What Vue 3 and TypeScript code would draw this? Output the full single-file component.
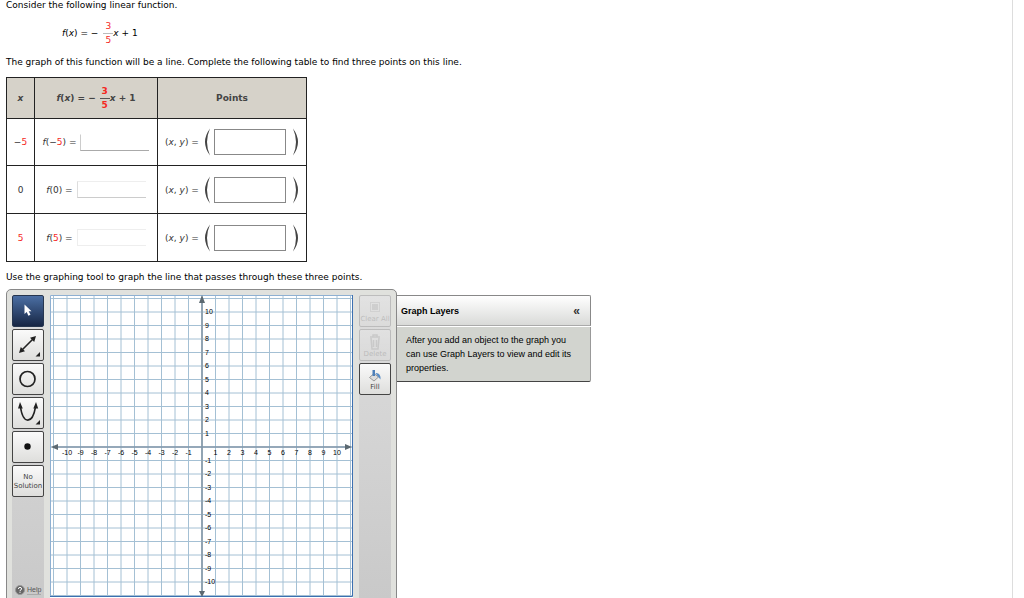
<script setup lang="ts">
import { ref } from 'vue'

interface Row {
  x: string
  red: boolean
  value: string
  point: string
  tone: string
}

const rows = ref<Row[]>([
  { x: '−5', red: true, value: '', point: '', tone: 'strong' },
  { x: '0', red: false, value: '', point: '', tone: 'soft' },
  { x: '5', red: true, value: '', point: '', tone: 'faint' },
])

const unit = 13.5
const originX = 152
const originY = 152
const gridLines = Array.from({ length: 23 }, (_, i) => i - 11)
const ticks = gridLines.filter((n) => n !== 0 && Math.abs(n) <= 10)
const px = (n: number) => originX + n * unit
const py = (n: number) => originY - n * unit
const digits = (s: string) => s.replace('−', '')
</script>

<template>
  <main class="page">
    <p class="line intro">Consider the following linear function.</p>

    <div class="formula">
      <span><i>f</i>(<i>x</i>) = −</span>
      <span class="fraction"><span>3</span><span class="den">5</span></span>
      <span><i>x</i> + 1</span>
    </div>

    <p class="line">The graph of this function will be a line. Complete the following table to find three points on this line.</p>

    <table class="points">
      <colgroup><col class="c-x"><col class="c-f"><col class="c-p"></colgroup>
      <thead>
        <tr>
          <th scope="col"><i>x</i></th>
          <th scope="col">
            <div class="expr">
              <span><i>f</i>(<i>x</i>) = −</span>
              <span class="fraction"><span>3</span><span class="den">5</span></span>
              <span><i>x</i> + 1</span>
            </div>
          </th>
          <th scope="col">Points</th>
        </tr>
      </thead>
      <tbody>
        <tr v-for="(row, i) in rows" :key="row.x">
          <td><template v-if="row.x !== digits(row.x)">−</template><span :class="{ red: row.red }">{{ digits(row.x) }}</span></td>
          <td>
            <div class="expr">
              <label :for="'value' + i"><i>f</i>(<template v-if="row.x !== digits(row.x)">−</template><span :class="{ red: row.red }">{{ digits(row.x) }}</span>) =</label>
              <input :id="'value' + i" v-model="row.value" class="value" :class="row.tone" type="text">
            </div>
          </td>
          <td>
            <div class="pair">
              <label :for="'point' + i">(<i>x</i>, <i>y</i>) =</label>
              <svg class="paren" width="7" height="28" viewBox="0 0 7 28" aria-hidden="true"><path d="M6 .5Q-4 14 6 27.5Q0 14 6 .5Z" /></svg>
              <input :id="'point' + i" v-model="row.point" class="point" type="text">
              <svg class="paren close" width="7" height="28" viewBox="0 0 7 28" aria-hidden="true"><path d="M1 .5Q11 14 1 27.5Q7 14 1 .5Z" /></svg>
            </div>
          </td>
        </tr>
      </tbody>
    </table>

    <p class="line">Use the graphing tool to graph the line that passes through these three points.</p>

    <section class="grapher" aria-label="Graphing tool">
      <div class="board">
        <div class="toolbar">
          <button class="tool active" type="button" aria-label="Select">
            <svg width="32" height="32" viewBox="0 0 32 32"><path d="M12.5 9.5V19l2.2-2 1.7 3.8 2.1-1-1.8-3.6h2.8z" fill="#fff" /></svg>
          </button>
          <button class="tool" type="button" aria-label="Line">
            <svg width="32" height="32" viewBox="0 0 32 32"><path d="M9 22L22 9" stroke="#222" stroke-width="1.6" /><path d="M7 24l1.8-6 4.2 4.2zM24 7l-1.8 6-4.2-4.2zM28 23v4.500h-4.500z" fill="#222" /></svg>
          </button>
          <button class="tool" type="button" aria-label="Circle">
            <svg width="32" height="32" viewBox="0 0 32 32"><circle cx="15.500" cy="16" r="7.500" fill="none" stroke="#222" stroke-width="1.700" /></svg>
          </button>
          <button class="tool" type="button" aria-label="Parabola">
            <svg width="32" height="32" viewBox="0 0 32 32"><path d="M8.500 10C11 27.500 20.500 27.500 23.500 10" fill="none" stroke="#222" stroke-width="1.600" /><path d="M8 5l2.800 6.500H6zM24 5l2.200 6.500H21.300zM28 23v4.500h-4.500z" fill="#222" /></svg>
          </button>
          <button class="tool" type="button" aria-label="Point">
            <svg width="32" height="32" viewBox="0 0 32 32"><circle cx="15.500" cy="15.500" r="3.200" fill="#111" /></svg>
          </button>
          <button class="tool words" type="button">No<br>Solution</button>
          <a class="help" href="#help">
            <svg width="10" height="10" viewBox="0 0 10 10" aria-hidden="true"><circle cx="5" cy="5" r="4.500" fill="#666" stroke="#999" /><path d="M3.400 4Q3.400 2.400 5 2.400T6.600 4Q6.600 4.700 5 5.500V6.300M5 7.200V8" fill="none" stroke="#fff" /></svg>
            <span>Help</span>
          </a>
        </div>

        <svg class="graph" width="303" height="303" viewBox="0 0 303 303" role="img" aria-label="Coordinate plane from −10 to 10">
          <rect width="303" height="303" fill="#fff" />
          <g stroke="#a4c0d4">
            <template v-for="n in gridLines" :key="n">
              <line :x1="px(n)" y1="0" :x2="px(n)" y2="302" />
              <line x1="0" :y1="py(n)" x2="302" :y2="py(n)" />
            </template>
          </g>
          <path d="M.5 302V.5H302" fill="none" stroke="#8eb0d2" />
          <path d="M302.500 0V301.500H0" fill="none" stroke="#3c70b0" />
          <path d="M152 3V299" stroke="#91a4b3" stroke-width="2" />
          <path d="M4 152H298" stroke="#8196a8" stroke-width="1.500" />
          <path d="M152 0l3 8h-6zM152 302l3-6h-6zM1 152l7-3v6zM302 152l-7-3v6z" fill="#5c6971" />
          <g class="tick">
            <text v-for="n in ticks" :key="'x' + n" :x="px(n)" y="160" text-anchor="middle">{{ n }}</text>
            <text v-for="n in ticks" :key="'y' + n" x="155" :y="py(n) + 2">{{ n }}</text>
          </g>
        </svg>

        <div class="toolbar">
          <button class="tool words disabled" type="button" disabled>
            <svg width="14" height="15" viewBox="0 0 14 15" aria-hidden="true"><rect x="2.500" y="2.500" width="9" height="9" fill="none" stroke="#aaa" /><rect x="4" y="4" width="6" height="6" fill="#999" /></svg>
            <span>Clear All</span>
          </button>
          <button class="tool words disabled" type="button" disabled>
            <svg width="14" height="17" viewBox="0 0 14 17" aria-hidden="true"><path d="M2 4h10M5 4V2h4v2M3 5l1 11h6l1-11M5.500 7v7M8.500 7v7" fill="none" stroke="#888" stroke-width="1.500" /></svg>
            <span>Delete</span>
          </button>
          <button class="tool words fill" type="button">
            <svg width="14" height="13" viewBox="0 0 14 13" aria-hidden="true"><path d="M1.500 8.500l4.500-4 4.500 3.500-4.500 4z" fill="#ddd" stroke="#999" /><path d="M4.500 1h2.500v6H4.500z" fill="#4d7fb9" /><path d="M7.500 4q5.500-.5 5 6.500L9.500 7z" fill="#5a8dc7" /></svg>
            <span>Fill</span>
          </button>
        </div>
      </div>

      <aside class="layers">
        <header class="layers-head">
          <h2>Graph Layers</h2>
          <button type="button" aria-label="Collapse layers">«</button>
        </header>
        <p class="layers-body">After you add an object to the graph you can use Graph Layers to view and edit its properties.</p>
      </aside>
    </section>
  </main>
</template>

<style>
html, body { background: #fff; }
</style>

<style scoped>
* { box-sizing: border-box; }
.page {
  height: 100vh;
  overflow: hidden;
  margin-right: 11px;
  padding-left: 6px;
  border-right: 1px solid #ddd;
  font: 9px/12px Verdana, "DejaVu Sans", sans-serif;
  color: #000;
}
.line { margin: 0; white-space: nowrap; }
.intro { line-height: 10px; }
.formula { display: flex; align-items: center; gap: 5px; margin: 8px 0 8px 56px; height: 30px; white-space: pre; }
.fraction { display: inline-flex; flex-direction: column; align-items: center; width: 10px; color: #f5281e; line-height: 13px; }
.den { width: 100%; border-top: 1px solid #bbb; text-align: center; }
.formula > :last-child { margin-left: -5px; }
.expr > .fraction + span { margin-left: -4px; }
.points { table-layout: fixed; width: 301px; margin: 9px 0; border-collapse: collapse; color: #333; }
.c-x { width: 28px; }
.c-f { width: 123px; }
.c-p { width: 149px; }
th, td { height: 48px; padding: 0; border: 1px solid #222; text-align: center; }
th { height: 41px; background: #d6d2c9; color: #444; }
tbody tr:first-child td { height: 47px; }
th .den { border-color: #555; }
.red { color: #f5281e; }
.expr { display: flex; align-items: center; justify-content: center; gap: 4px; white-space: pre; }
.pair { display: flex; align-items: center; gap: 3px; padding-left: 7px; white-space: pre; }
.pair label { width: 36px; text-align: left; }
.paren { flex: none; fill: #444; }
.close { margin-left: 3px; }
input { min-width: 0; padding: 0 3px; border-radius: 0; background: #fff; font: inherit; outline: none; }
.value { width: 69px; height: 17px; border: 1px solid #eee; border-width: 1px 0 1px 1px; }
.strong { border-color: transparent transparent #aaa #ccc; }
.soft { border-bottom-color: #ccc; border-left-color: #ddd; }
.point { width: 72px; height: 26px; border: 1px solid #888; }
.grapher { display: flex; align-items: flex-start; margin-top: 6px; font-family: "Liberation Sans", Arial, sans-serif; }
.board { display: flex; gap: 6px; padding: 5px; border: 1px solid #888; border-radius: 5px; background: #e0e1dd; }
.toolbar { display: flex; flex-direction: column; gap: 2px; width: 32px; background: linear-gradient(#ddd, #c9c9c9); }
.tool {
  display: flex;
  align-items: center;
  justify-content: center;
  width: 32px;
  height: 32px;
  padding: 0;
  border: 1px solid #444;
  border-radius: 2px;
  background: linear-gradient(#fafafa, #dededc);
}
.tool > svg { flex: none; }
.active { background: linear-gradient(#4b6fa4, #172644); border-color: #26364f; }
.words { flex-direction: column; padding-top: 2px; font: 7px/9px "DejaVu Sans", sans-serif; color: #444; white-space: nowrap; }
.fill { gap: 1px; }
.disabled { opacity: 0.2; }
.help { display: flex; align-items: center; gap: 2px; margin-top: auto; padding: 0 0 3px 3px; color: #555; font-size: 7px; text-decoration: none; }
.help span { border-bottom: 1px solid #aaa; line-height: 9px; }
.graph { display: block; flex: none; }
.tick { font: 7px "Liberation Sans", Arial, sans-serif; fill: #000; }
.layers { width: 194px; margin-top: 6px; }
.layers-head {
  display: flex;
  align-items: center;
  justify-content: space-between;
  height: 31px;
  padding: 0 10px 0 4px;
  border: 1px solid #888;
  border-left: 0;
  border-bottom-color: #aaa;
  border-radius: 0 2px 0 0;
  background: linear-gradient(#fff, #d9dad8);
}
.layers-head h2 { margin: 0; font-size: 9px; }
.layers-head button { padding: 0; border: 0; background: none; color: #333; font: bold 12px/12px "Liberation Sans", Arial, sans-serif; }
.layers-body {
  margin: 1px 0 0;
  padding: 6px 8px 6px 9px;
  border: 1px solid #999;
  border-width: 0 1px 1px 0;
  border-bottom-color: #444;
  border-radius: 0 0 2px 0;
  background: #d2d4cf;
  font-size: 9px;
  line-height: 14px;
}
</style>
